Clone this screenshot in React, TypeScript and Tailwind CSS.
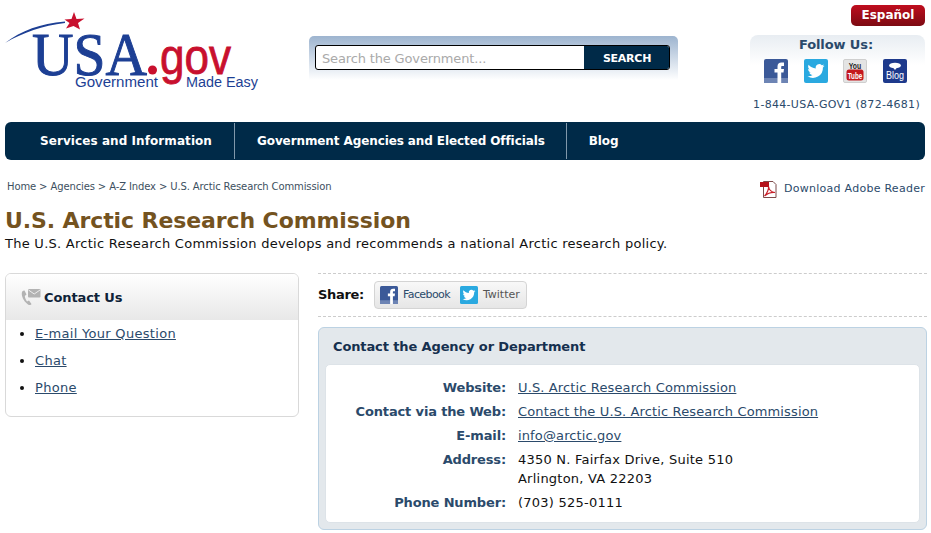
import React from "react";

function FacebookIcon({ size = 24 }: { size?: number }) {
  return (
    <svg width={size} height={size} viewBox="0 0 24 24" className="shrink-0">
      <rect width="24" height="24" rx="2" fill="#3b5998" />
      <rect y="19" width="24" height="5" fill="#6d84b4" />
      <path d="M13.5 24V13.5H10.5V10H13.5V7.5C13.5 4.8 15 3.5 17.5 3.5H20V7H18.3C17.4 7 17.2 7.5 17.2 8.2V10H20L19.5 13.5H17.2V24Z" fill="#fff" />
    </svg>
  );
}

function TwitterIcon({ size = 24 }: { size?: number }) {
  return (
    <svg width={size} height={size} viewBox="0 0 24 24" className="shrink-0">
      <rect width="24" height="24" rx="2" fill="#2aa9e0" />
      <path d="M20.5 6.7c-.6.3-1.3.5-2 .6.7-.4 1.3-1.1 1.5-1.9-.7.4-1.4.7-2.2.8a3.5 3.5 0 0 0-6 3.2C8.9 9.200 6.300 7.800 4.600 5.700c-.9 1.600-.5 3.600 1.100 4.700-.6 0-1.100-.2-1.600-.4 0 1.700 1.200 3.100 2.800 3.400-.5.100-1 .2-1.600.1.400 1.400 1.700 2.400 3.300 2.400A7 7 0 0 1 3.500 17.300 10 10 0 0 0 18.900 8.400c.7-.4 1.200-1 1.600-1.700Z" fill="#fff" />
    </svg>
  );
}

function YoutubeIcon() {
  return (
    <svg width="24" height="24" viewBox="0 0 24 24" className="shrink-0">
      <rect x=".5" y=".5" width="23" height="23" rx="1.500" fill="#e4e4e4" stroke="#cfcfcf" />
      <text transform="translate(12 9.500) scale(.72 1)" textAnchor="middle" fontFamily="Liberation Sans, sans-serif" fontWeight="700" fontSize="9.500" fill="#222">You</text>
      <rect x="3.500" y="10.500" width="17" height="11" rx="2.500" fill="#c4171d" />
      <text transform="translate(12 19.500) scale(.66 1)" textAnchor="middle" fontFamily="Liberation Sans, sans-serif" fontWeight="700" fontSize="9.500" fill="#fff">Tube</text>
    </svg>
  );
}

function BlogIcon() {
  return (
    <svg width="24" height="24" viewBox="0 0 24 24" className="shrink-0">
      <rect width="24" height="24" rx="2" fill="#1e3a8c" />
      <ellipse cx="12" cy="6.500" rx="6" ry="2.800" fill="#fff" />
      <path d="M10 8.500h4l-2 2.500z" fill="#fff" />
      <text x="12" y="20" textAnchor="middle" fontFamily="Liberation Sans, sans-serif" fontSize="10" fill="#fff" textLength="18" lengthAdjust="spacingAndGlyphs">Blog</text>
    </svg>
  );
}

function Logo() {
  return (
    <svg width="258" height="94" viewBox="5 0 258 94" className="shrink-0">
      <path d="M5 43C22 30 40 24 65 21.500L65 23C42 26 24 32 5 43Z" fill="#1d3f94" />
      <path d="M74 12L76.500 19L84.500 18.500L78 23L80 29.500L73.500 26L66 28.500L69.500 23L64.500 19.500L71.500 19Z" fill="#c8102e" />
      <text x="32" y="75" fontFamily="Liberation Serif, serif" fontSize="62" fill="#1d3f94" stroke="#1d3f94" strokeWidth="1" textLength="115" lengthAdjust="spacingAndGlyphs">USA</text>
      <circle cx="152.500" cy="70" r="4.500" fill="#c8102e" />
      <text x="160" y="74" fontFamily="Liberation Sans, sans-serif" fontSize="50" fill="#c8102e" stroke="#c8102e" strokeWidth=".8" textLength="71" lengthAdjust="spacingAndGlyphs">gov</text>
      <text x="75" y="87" fontFamily="Liberation Sans, sans-serif" fontSize="14" fill="#1d3f94" textLength="83" lengthAdjust="spacingAndGlyphs">Government</text>
      <text x="186" y="87" fontFamily="Liberation Sans, sans-serif" fontSize="14" fill="#1d3f94" textLength="72" lengthAdjust="spacingAndGlyphs">Made Easy</text>
    </svg>
  );
}

function ContactIcon() {
  return (
    <svg width="20" height="17" viewBox="0 0 20 17" className="shrink-0">
      <path d="M1 3C0 6 2 12 7 15.500C8.500 16.500 10 16 10.500 15L8 11.500L6 12.500C5 11 4 9 3.800 7L5.500 5.500L3.500 1.500C2.500 1.500 1.500 2 1 3Z" fill="#b3b3b3" />
      <rect x="7" y="0" width="12.500" height="8.500" rx="1" fill="#b3b3b3" />
      <path d="M7.500 1L13.200 5L19 1" fill="none" stroke="#eee" strokeWidth="1" />
    </svg>
  );
}

function PdfIcon() {
  return (
    <svg width="17" height="17" viewBox="0 0 17 17" className="shrink-0">
      <path d="M3.500 .5H13L16 3.500V16.500H3.500Z" fill="#fff" stroke="#7d4a4a" />
      <rect x="0" y="1" width="9" height="5" fill="#b5121b" />
      <path d="M4.500 15C7 12.500 9 8 8.500 5.500C9 8.500 11 11 15 11.500C11.500 11.200 7.500 12.500 4.500 15Z" fill="none" stroke="#c8202a" strokeWidth="1.200" />
    </svg>
  );
}

const navItems = ["Services and Information", "Government Agencies and Elected Officials", "Blog"];

const contactRows = [
  { label: "Website:", value: "U.S. Arctic Research Commission", link: true },
  { label: "Contact via the Web:", value: "Contact the U.S. Arctic Research Commission", link: true },
  { label: "E-mail:", value: "info@arctic.gov", link: true },
  { label: "Address:", value: "4350 N. Fairfax Drive, Suite 510", extra: "Arlington, VA 22203" },
  { label: "Phone Number:", value: "(703) 525-0111" },
];

export default function App() {
  return (
    <div className="w-[931px] h-[533px] overflow-hidden bg-white px-[5px] font-['DejaVu_Sans',Verdana,sans-serif] text-[13px] text-[#111]">
      {/* header */}
      <header className="flex h-[122px] w-[920px]">
        <div className="w-[304px] shrink-0">
          <Logo />
        </div>
        <div className="mt-[36px] h-[44px] w-[369px] shrink-0 rounded-t-[5px] bg-gradient-to-b from-[#9db4cf] to-white px-[6px] pt-[9px]">
          <div className="flex h-[25px] w-[355px] overflow-hidden rounded-[3px] border border-black bg-white">
            <span className="flex-1 pl-[6px] text-[13px] leading-[25px] tracking-[-0.15px] text-[#aaa]">Search the Government...</span>
            <span className="w-[85px] bg-[#002a48] pl-[1px] text-center text-[11px] font-bold leading-[25px] tracking-[-0.25px] text-white">SEARCH</span>
          </div>
        </div>
        <div className="ml-[72px] flex w-[175px] flex-col items-end">
          <span className="mt-[5px] h-[21px] w-[74px] rounded-[5px] bg-gradient-to-b from-[#c00d1e] to-[#7c0a12] text-center text-[12px] font-bold leading-[20px] text-white">Español</span>
          <div className="mt-[9px] h-[30px] w-[175px] rounded-t-[8px] bg-gradient-to-b from-[#e8edf2] to-white pr-[3px] text-center text-[13px] font-bold leading-[19px] tracking-[-0.1px] text-[#2b4a6b]">Follow Us:</div>
          <div className="-mt-[6px] flex w-[175px] justify-between pl-[14px] pr-[18px]">
            <FacebookIcon />
            <TwitterIcon />
            <YoutubeIcon />
            <BlogIcon />
          </div>
          <span className="mt-[14px] pr-[5px] text-[11px] tracking-[0.3px] text-[#2b4a6b]">1-844-USA-GOV1 (872-4681)</span>
        </div>
      </header>

      {/* main nav */}
      <nav className="flex h-[38px] w-[920px] items-center rounded-[6px] bg-[#002a48] py-[1px] text-[12px] font-bold text-white">
        <span className="flex h-full w-[230px] items-center justify-end border-r border-[#8098ab] pr-[22px] tracking-[0.07px]">{navItems[0]}</span>
        <span className="flex h-full items-center border-r border-[#8098ab] pl-[22px] pr-[21px] tracking-[-0.1px]">{navItems[1]}</span>
        <span className="pl-[22px] tracking-[-0.1px]">{navItems[2]}</span>
      </nav>

      {/* breadcrumb row */}
      <div className="mt-[19px] flex h-[15px] w-[920px] items-center justify-between pl-[2px]">
        <span className="text-[10px] tracking-[-0.12px] text-[#3d4f60]">Home &gt; Agencies &gt; A-Z Index &gt; U.S. Arctic Research Commission</span>
        <span className="mt-[5px] flex items-center gap-[7px] text-[11px] tracking-[0.27px] text-[#2b4a6b]">
          <PdfIcon />
          Download Adobe Reader
        </span>
      </div>

      <h1 className="mt-[13px] text-[22px] font-bold leading-[28px] tracking-[-0.1px] text-[#74531f]">U.S. Arctic Research Commission</h1>
      <p className="text-[13px] leading-[18px] tracking-[0.26px]">The U.S. Arctic Research Commission develops and recommends a national Arctic research policy.</p>

      <div className="mt-[20px] flex items-start">
        {/* sidebar */}
        <aside className="h-[144px] w-[294px] shrink-0 overflow-hidden rounded-[6px] border border-[#d9d9d9]">
          <div className="flex h-[46px] items-center gap-[3px] bg-gradient-to-b from-white to-[#e8e8e8] pl-[15px] pt-[1px] text-[13px] font-bold tracking-[-0.1px] text-[#0f2238]">
            <ContactIcon />
            Contact Us
          </div>
          <ul className="mt-[4px] list-disc pl-[29px] text-[13px] tracking-[0.3px] marker:text-[#111]">
            <li className="h-[27px] leading-[19px]"><a className="text-[#2b4a6b] underline">E-mail Your Question</a></li>
            <li className="h-[27px] leading-[19px]"><a className="text-[#2b4a6b] underline">Chat</a></li>
            <li className="h-[27px] leading-[19px]"><a className="text-[#2b4a6b] underline">Phone</a></li>
          </ul>
        </aside>

        {/* right column */}
        <main className="ml-[19px] w-[609px] shrink-0">
          <div className="flex h-[44px] items-center border-y border-dashed border-[#ccc]">
            <span className="font-bold tracking-[-0.3px]">Share:</span>
            <div className="ml-[10px] flex h-[28px] items-center rounded-[4px] border border-[#d4d4d4] bg-gradient-to-b from-[#f8f8f8] to-[#e6e6e6] pl-[5px] pr-[6px] text-[11px] text-[#2b4a6b]">
              <FacebookIcon size={18} />
              <span className="ml-[5px] tracking-[-0.6px]">Facebook</span>
              <span className="ml-[10px]"><TwitterIcon size={18} /></span>
              <span className="ml-[5px] text-[#555]">Twitter</span>
            </div>
          </div>

          <section className="mt-[10px] h-[203px] rounded-[6px] border border-[#bcd2e3] bg-[#e3e8ec] px-[6px]">
            <h2 className="h-[36px] pl-[8px] text-[13px] font-bold leading-[38px] tracking-[-0.12px] text-[#16304f]">Contact the Agency or Department</h2>
            <div className="flex h-[159px] flex-col gap-[5px] rounded-[5px] border border-[#dde3e8] bg-white pt-[13px]">
              {contactRows.map((row) => (
                <div key={row.label} className="flex leading-[19px]">
                  <span className="w-[180px] shrink-0 text-right font-bold tracking-[-0.15px] text-[#2b4a6b]">{row.label}</span>
                  <div className={row.link ? "ml-[12px] tracking-[0.13px]" : "ml-[12px] tracking-[0.23px]"}>
                    {row.link ? <a className="text-[#2b4a6b] underline">{row.value}</a> : <span>{row.value}</span>}
                    {row.extra && <div>{row.extra}</div>}
                  </div>
                </div>
              ))}
            </div>
          </section>
        </main>
      </div>
    </div>
  );
}
